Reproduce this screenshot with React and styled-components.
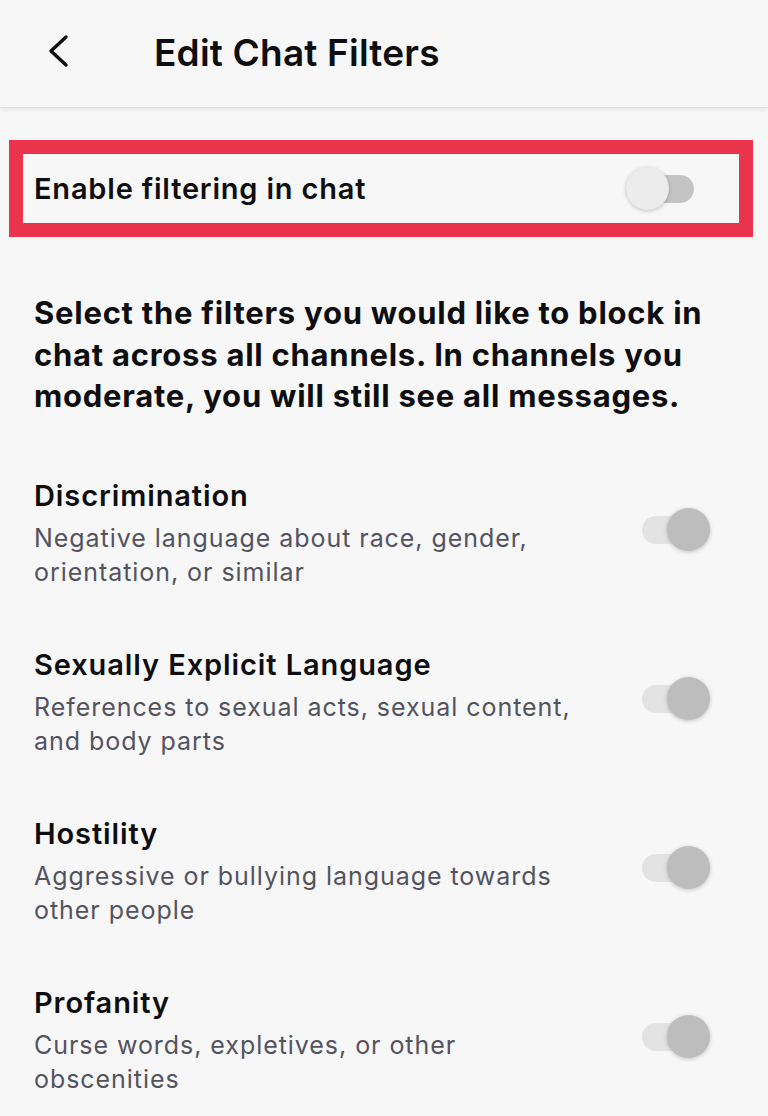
import React from 'react';
import styled, {createGlobalStyle} from "styled-components";

const GlobalStyle = createGlobalStyle`
  html, body {
    margin: 0;
    padding: 0;
    background-color: #f7f7f7;
  }

  body {
    font-family: Inter, "Noto Sans", sans-serif;
    color: #0e0e10;
  }
`

const Container = styled.div`
  width: 768px;
  min-height: 1116px;
  background-color: #f7f7f7;
`

const Header = styled.header`
  height: 107px;
  display: flex;
  align-items: center;
  border-bottom: 1px solid #e2e2e2;
  box-shadow: 0 2px 4px rgba(0, 0, 0, 0.06);
  background-color: #f7f7f7;
`

const BackButton = styled.button`
  width: 155px;
  height: 100%;
  padding: 0 0 6px 45px;
  border: none;
  background: none;
  display: flex;
  align-items: center;
  cursor: pointer;
`

const Title = styled.h1`
  margin: 0 0 2px -1px;
  font-size: 37px;
  font-weight: 600;
  letter-spacing: 0.2px;
`

const Content = styled.main`
  padding: 32px 15px 0 9px;
`

const Highlight = styled.div`
  display: flex;
  align-items: center;
  justify-content: space-between;
  height: 69px;
  padding: 0 45px 0 11px;
  border: 14px solid #e9344b;
`

const MasterLabel = styled.span`
  font-size: 29px;
  font-weight: 600;
  letter-spacing: 0.8px;
`

const Intro = styled.p`
  margin: 55px 0 0 25px;
  font-size: 31px;
  font-weight: 700;
  line-height: 41.5px;
  letter-spacing: 0.75px;
  white-space: nowrap;
`

const FilterList = styled.div`
  margin: 61px 0 0 25px;
  display: flex;
  flex-direction: column;
  gap: 58px;
`

const Filter = styled.div`
  display: flex;
  align-items: center;
  justify-content: space-between;
  padding-right: 43px;
`

const FilterText = styled.div`
  display: flex;
  flex-direction: column;
  gap: 7px;
  width: 570px;
`

const FilterName = styled.span`
  font-size: 29px;
  font-weight: 600;
  line-height: 36px;
  letter-spacing: 0.9px;
`

const FilterDesc = styled.span`
  font-size: 25px;
  line-height: 34px;
  color: #53535f;
  letter-spacing: 0.95px;
`

const Toggle = styled.div`
  position: relative;
  width: 68px;
  height: 44px;
  flex-shrink: 0;
  display: flex;
  align-items: center;
  margin-top: ${(props) => props.on ? "-6px" : "0"};
`

const Track = styled.div`
  width: 100%;
  height: 28px;
  border-radius: 14px;
  background-color: ${(props) => props.on ? "#e3e3e3" : "#c4c4c4"};
`

const Thumb = styled.div`
  position: absolute;
  top: 0;
  left: ${(props) => props.on ? "25px" : "0"};
  width: 43px;
  height: 43px;
  border-radius: 50%;
  background-color: ${(props) => props.on ? "#bdbdbd" : "#ececec"};
  box-shadow: 0 1px 4px rgba(0, 0, 0, 0.22);
`

const Switch = ({on}) => (
    <Toggle on={on ? 1 : 0}>
        <Track on={on ? 1 : 0}/>
        <Thumb on={on ? 1 : 0}/>
    </Toggle>
);

const filters = [
    {name: "Discrimination", desc: ["Negative language about race, gender,", "orientation, or similar"]},
    {name: "Sexually Explicit Language", desc: ["References to sexual acts, sexual content,", "and body parts"]},
    {name: "Hostility", desc: ["Aggressive or bullying language towards", "other people"]},
    {name: "Profanity", desc: ["Curse words, expletives, or other", "obscenities"]},
];

const App = () => {
    return (
        <Container>
            <GlobalStyle/>
            <Header>
                <BackButton aria-label="Back">
                    <svg width="26" height="34" viewBox="0 0 26 34" fill="none">
                        <path d="M21 3 L6 17 L21 31" stroke="#0e0e10" strokeWidth="3.4"
                              strokeLinecap="round" strokeLinejoin="round"/>
                    </svg>
                </BackButton>
                <Title>Edit Chat Filters</Title>
            </Header>
            <Content>
                <Highlight>
                    <MasterLabel>Enable filtering in chat</MasterLabel>
                    <Switch on={false}/>
                </Highlight>
                <Intro>
                    Select the filters you would like to block in<br/>
                    chat across all channels. In channels you<br/>
                    moderate, you will still see all messages.
                </Intro>
                <FilterList>
                    {filters.map((f) => (
                        <Filter key={f.name}>
                            <FilterText>
                                <FilterName>{f.name}</FilterName>
                                <FilterDesc>
                                    {f.desc[0]}<br/>{f.desc[1]}
                                </FilterDesc>
                            </FilterText>
                            <Switch on/>
                        </Filter>
                    ))}
                </FilterList>
            </Content>
        </Container>
    );
};

export default App;
